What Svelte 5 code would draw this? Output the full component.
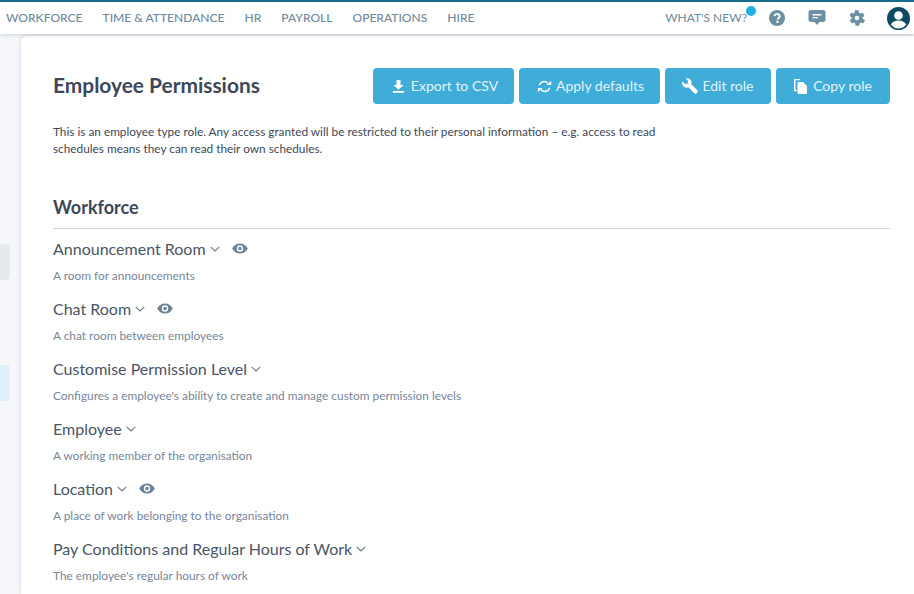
<script>
  const nav = ['WORKFORCE', 'TIME & ATTENDANCE', 'HR', 'PAYROLL', 'OPERATIONS', 'HIRE'];
  const rows = [
    { t: 'Announcement Room', d: 'A room for announcements', eye: true },
    { t: 'Chat Room', d: 'A chat room between employees', eye: true },
    { t: 'Customise Permission Level', d: "Configures a employee's ability to create and manage custom permission levels" },
    { t: 'Employee', d: 'A working member of the organisation' },
    { t: 'Location', d: 'A place of work belonging to the organisation', eye: true },
    { t: 'Pay Conditions and Regular Hours of Work', d: "The employee's regular hours of work" }
  ];
</script>

<div class="page">
  <header class="top">
    <nav class="nav">
      {#each nav as n}<span>{n}</span>{/each}
    </nav>
    <div class="tools">
      <span class="new">WHAT'S NEW?<i class="dot"></i></span>
      <svg class="i1" width="18" height="18" viewBox="0 0 18 18"><circle cx="9" cy="9" r="8" fill="#6d8fa3"/><path d="M6.400 7a2.700 2.700 0 0 1 5.300.4c0 1.700-2.200 1.800-2.200 3.200" fill="none" stroke="#fff" stroke-width="1.900"/><rect x="8.400" y="11.800" width="2.100" height="2.100" fill="#fff"/></svg>
      <svg class="i2" width="18" height="18" viewBox="0 0 18 18"><path d="M3 1h12a2.500 2.500 0 0 1 2.500 2.500v7a2.500 2.500 0 0 1-2.500 2.500h-3.500l-2.500 3-2.500-3H3a2.500 2.500 0 0 1-2.500-2.500v-7A2.500 2.500 0 0 1 3 1z" fill="#6d8fa3"/><path d="M4.500 5h9v1.500h-9zM4.500 8h5.500v1.300H4.500z" fill="#fff"/></svg>
      <svg class="i3" width="18" height="18" viewBox="0 0 24 24"><path fill="#6d8fa3" fill-rule="evenodd" d="M19.400 13c.1-.3.1-.7.1-1s0-.7-.1-1l2.200-1.700c.2-.2.2-.4.100-.6l-2.100-3.600c-.1-.2-.4-.3-.6-.2l-2.600 1c-.5-.4-1.100-.7-1.700-1l-.4-2.700c0-.2-.3-.4-.5-.4h-4.200c-.2 0-.5.200-.5.400l-.4 2.700c-.6.300-1.200.6-1.700 1l-2.600-1c-.2-.1-.5 0-.6.200L2.500 8.700c-.1.200-.1.500.1.600L4.800 11c-.1.300-.1.700-.1 1s0 .7.100 1l-2.200 1.700c-.2.200-.2.400-.1.600l2.100 3.600c.1.200.4.300.6.200l2.600-1c.5.400 1.100.7 1.700 1l.4 2.700c0 .2.300.4.500.4h4.200c.2 0 .5-.2.500-.4l.4-2.700c.6-.3 1.200-.6 1.700-1l2.600 1c.2.100.5 0 .6-.2l2.100-3.600c.1-.2.1-.5-.1-.6zM12 15a3 3 0 1 1 0-6 3 3 0 0 1 0 6z"/></svg>
      <svg class="i4" width="23" height="23" viewBox="0 0 23 23"><circle cx="11.500" cy="11.500" r="11.500" fill="#0f4a63"/><circle cx="11.500" cy="8.500" r="4.300" fill="#fff"/><path d="M3.800 17.600c1.500-3 4.500-4.100 7.700-4.100s6.200 1.100 7.700 4.100a9.600 9.600 0 0 1-15.400 0z" fill="#fff"/></svg>
    </div>
  </header>

  <div class="body">
    <aside class="side">
      <div class="pill grey"></div>
      <div class="pill blue"></div>
    </aside>
    <main class="card">
      <div class="head">
        <h1>Employee Permissions</h1>
        <div class="btns">
          <button class="b1"><svg width="13" height="13" viewBox="0 0 13 13"><path d="M4.500 0h4v5h3l-5 4.700-5-4.700h3zM.8 11h11.400v1.800H.8z" fill="#fff"/></svg><span>Export to CSV</span></button>
          <button class="b2"><svg width="15" height="13" viewBox="0 0 15 13"><path d="M2.300 5.300A5 5 0 0 1 10.800 3.200M12.700 7.700A5 5 0 0 1 4.200 9.800" fill="none" stroke="#fff" stroke-width="1.400"/><path d="M9.500 5.100h4.700V.8zM5.500 7.900H.8v4.300z" fill="#fff"/></svg><span>Apply defaults</span></button>
          <button class="b3"><svg width="16" height="16" viewBox="0 0 15 15"><path transform="matrix(-1 0 0 1 15 0)" d="M14.600 3.200l-2.500 2.400-2.400-.3-.5-2.400L11.700.5A4.200 4.200 0 0 0 6.300 5.900L.7 11.500a1.500 1.500 0 0 0 0 2.100l.7.700a1.500 1.500 0 0 0 2.100 0l5.600-5.600a4.200 4.200 0 0 0 5.500-5.500z" fill="#fff"/></svg><span>Edit role</span></button>
          <button class="b4"><svg width="14" height="15" viewBox="0 0 14 15"><path d="M1 0h5v1.200H1.500V11H3v1.200H1a1 1 0 0 1-1-1V1a1 1 0 0 1 1-1z" fill="#fff"/><path d="M4.500 3H9l4 4v7a1 1 0 0 1-1 1H4.500a1 1 0 0 1-1-1V4a1 1 0 0 1 1-1z" fill="#fff"/></svg><span>Copy role</span></button>
        </div>
      </div>
      <p class="intro">This is an employee type role. Any access granted will be restricted to their personal information – e.g. access to read schedules means they can read their own schedules.</p>
      <h2>Workforce</h2>
      {#each rows as r}
        <section class="row">
          <div class="title">
            <span>{r.t}</span>
            <svg class="chev" width="10" height="6" viewBox="0 0 10 6"><path d="M.7.8 5 5 9.300.8" fill="none" stroke="#6b7a8c" stroke-width="1.100"/></svg>
            {#if r.eye}
              <svg class="eye" width="16" height="11" viewBox="0 0 16 11"><path fill="#6b8399" fill-rule="evenodd" d="M8 .5C4.500.5 1.600 2.500.2 5.500 1.600 8.500 4.500 10.500 8 10.500s6.400-2 7.800-5C14.400 2.500 11.500.5 8 .5zm0 8.200a3.200 3.200 0 1 1 0-6.400 3.200 3.200 0 0 1 0 6.400zM8 3.700a1.800 1.800 0 1 0 0 3.600 1.800 1.800 0 0 0 0-3.600z"/></svg>
            {/if}
          </div>
          <p class="desc">{r.d}</p>
        </section>
      {/each}
    </main>
  </div>
</div>

<style>
  :global(body) { margin: 0; background: #f5f7fa; overflow: hidden; }
  .page { width: 914px; height: 594px; overflow: hidden; font-family: Lato, sans-serif; display: flex; flex-direction: column; }
  .top { height: 32px; flex: none; background: #fff; border-top: 2px solid #176b8c; box-shadow: 0 1px 4px rgba(40, 50, 70, .2); display: flex; align-items: center; justify-content: space-between; position: relative; z-index: 2; }
  .nav { display: flex; gap: 20px; padding-left: 6px; font-size: 12.04px; font-weight: 500; color: #6f8a9c; margin-top: -1px; }
  .tools { display: flex; align-items: center; }
  .new { font-size: 12px; color: #6f8a9c; position: relative; margin-right: 21px; margin-top: -1px; }
  .dot { position: absolute; width: 10px; height: 10px; border-radius: 50%; background: #1cb2dc; right: -9px; top: -4px; }
  .i2 { margin-left: 22px; }
  .i3 { margin-left: 22px; }
  .i4 { margin: 0 4px 0 21px; }
  .body { flex: 1; display: flex; min-height: 0; }
  .side { width: 21px; flex: none; padding-top: 210px; box-sizing: border-box; }
  .pill { width: 10px; height: 36px; border-radius: 0 4px 4px 0; }
  .grey { background: #e6e9ed; }
  .blue { background: #dff2fb; margin-top: 85px; }
  .card { flex: 1; margin-top: 2px; background: #fff; border-radius: 6px 0 0 0; box-shadow: 0 0 5px rgba(60, 70, 110, .18); padding: 32px 24px 0 32px; min-width: 0; }
  .head { display: flex; justify-content: space-between; align-items: center; height: 36px; }
  h1 { margin: -2px 0 0; font-size: 20.9px; font-weight: 700; color: #3c4858; line-height: 36px; }
  .btns { display: flex; gap: 5px; }
  button { height: 36px; border: 0; border-radius: 4px; background: #3fadd7; color: #e3f3fa; font: 400 14px Lato, sans-serif; display: flex; align-items: center; justify-content: center; gap: 5px; padding: 0; }
  button span { margin-top: -2px; }
  .b1 { width: 141px; gap: 6px; padding-left: 3px; }
  .b2 { width: 141px; gap: 4px; padding-left: 2px; }
  .b3 { width: 106px; gap: 4px; }
  .b4 { width: 114px; }
  .intro { margin: 19px 0 0; width: 610px; font-size: 11.82px; line-height: 17px; color: #3c4858; }
  h2 { margin: 38px 0 -1px; padding-bottom: 9px; border-bottom: 1px solid #cdd3de; font-size: 18px; font-weight: 700; line-height: 24px; color: #3c4858; }
  .row { height: 60px; }
  .title { display: flex; align-items: center; height: 20px; padding-top: 10px; font-size: 16px; color: #4a5566; }
  .chev { margin-left: 4px; margin-top: 2px; }
  .eye { margin-left: 12px; margin-top: 1px; }
  .desc { margin: 10px 0 0; font-size: 11.88px; line-height: 16px; color: #77859a; }
</style>
